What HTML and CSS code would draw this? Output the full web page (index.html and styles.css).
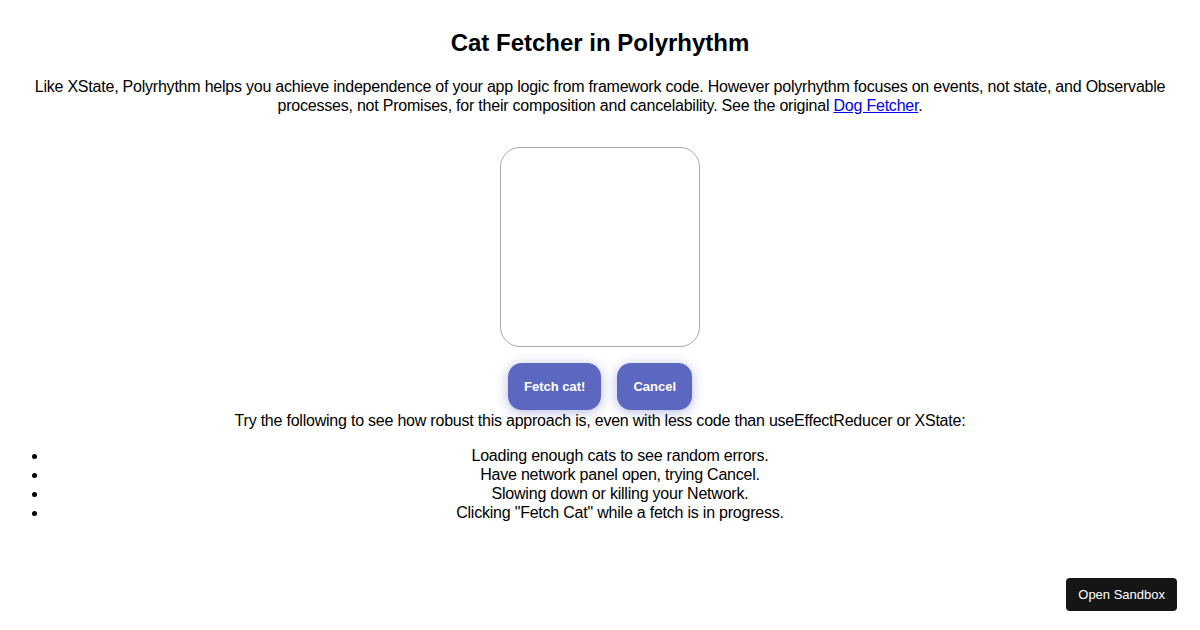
FILE: index.html
```html
<!DOCTYPE html>
<html>
	<head>
		<meta charset="UTF-8">
		<title>Cat Fetcher in Polyrhythm</title>
		<link rel="stylesheet" href="styles.css">
	</head>
	<body>
		<div class="app">
			<h1>Cat Fetcher in Polyrhythm</h1>
			<p class="intro">Like XState, Polyrhythm helps you achieve independence of your app logic from framework code. However polyrhythm focuses on events, not state, and Observable processes, not Promises, for their composition and cancelability. See the original <a href="#">Dog Fetcher</a>.</p>
			<div class="cat"></div>
			<div class="actions">
				<button>Fetch cat!</button>
				<button>Cancel</button>
			</div>
			<p class="hint">Try the following to see how robust this approach is, even with less code than useEffectReducer or XState:</p>
			<ul>
				<li>Loading enough cats to see random errors.</li>
				<li>Have network panel open, trying Cancel.</li>
				<li>Slowing down or killing your Network.</li>
				<li>Clicking "Fetch Cat" while a fetch is in progress.</li>
			</ul>
		</div>
		<a class="sandbox" href="#">Open Sandbox</a>
	</body>
</html>
```

FILE: styles.css
```css
body {
	margin: 8px;
	font-family: "Liberation Sans", Arial, sans-serif;
	font-size: 16px;
	line-height: 19px;
	letter-spacing: -0.22px;
	color: #000;
	background: #fff;
}

.app {
	text-align: center;
	padding-top: 13px;
}

h1 {
	font-size: 24px;
	line-height: 28px;
	letter-spacing: 0;
	margin: 8px 0 20px;
}

p { margin: 0; }

a { color: #0000ee; }

.intro { margin-bottom: 32px; }

.cat {
	width: 198px;
	height: 198px;
	margin: 0 auto;
	border: 1px solid #aaa;
	border-radius: 20px;
}

.actions {
	display: flex;
	justify-content: center;
	gap: 16px;
	margin-top: 16px;
	margin-bottom: 1px;
}

.actions button {
	font-family: "Liberation Sans", Arial, sans-serif;
	font-size: 13px;
	font-weight: bold;
	color: #fff;
	background: #5c67c0;
	border: none;
	border-radius: 14px;
	height: 47px;
	padding: 0 16px;
	box-shadow: 0 2px 12px rgba(92, 103, 192, .45);
}

.hint { margin-bottom: 16px; }

ul {
	margin: 0;
	padding-left: 40px;
}

.sandbox {
	position: fixed;
	right: 23px;
	bottom: 19px;
	background: #151515;
	color: #fff;
	font-size: 13px;
	line-height: 33px;
	letter-spacing: 0;
	padding: 0 12px;
	border-radius: 4px;
	text-decoration: none;
}
```
